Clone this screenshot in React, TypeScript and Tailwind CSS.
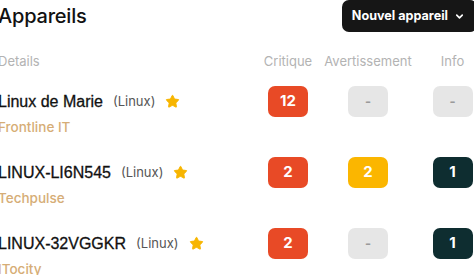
import { ChevronDown, Star } from 'lucide-react'

type Level = number | null

const devices: { name: string; os: string; company: string; critique: Level; warn: Level; info: Level }[] = [
  { name: 'Linux de Marie', os: '(Linux)', company: 'Frontline IT', critique: 12, warn: null, info: null },
  { name: 'LINUX-LI6N545', os: '(Linux)', company: 'Techpulse', critique: 2, warn: 2, info: 1 },
  { name: 'LINUX-32VGGKR', os: '(Linux)', company: 'ITocity', critique: 2, warn: null, info: 1 },
]

function Badge({ value, color }: { value: Level; color: string }) {
  if (value === null) {
    return (
      <div className="w-[40px] h-[31px] rounded-[7px] bg-[#e6e6e6] flex items-center justify-center text-[#9a9a9a] text-[13px] font-bold">
        -
      </div>
    )
  }
  return (
    <div className={`w-[40px] h-[31px] rounded-[7px] flex items-center justify-center text-white text-[15px] font-bold ${color}`}>
      {value}
    </div>
  )
}

export default function App() {
  return (
    <div className="w-[474px] h-[275px] overflow-hidden bg-white" style={{ fontFamily: 'Inter, "Noto Sans", sans-serif' }}>
      <div className="w-[486px] ml-[-2px]">
        {/* Title */}
        <div className="flex items-center justify-between h-[32px] pr-[7px]">
          <h1 className="text-[20px] font-medium text-[#111] tracking-[-0.2px]">Appareils</h1>
          <button className="h-[32px] pl-[10px] pr-[12px] rounded-[7px] bg-[#161616] text-white text-[12.6px] font-bold flex items-center gap-[6px]">
            Nouvel appareil
            <ChevronDown className="w-[11px] h-[11px]" strokeWidth={3.5} />
          </button>
        </div>

        {/* Header */}
        <div className="grid grid-cols-[263px_54px_106px_63px] items-center h-[20px] mt-[20px] text-[13px] text-[#b3b3b3]">
          <div>Details</div>
          <div className="text-center">Critique</div>
          <div className="text-center">Avertissement</div>
          <div className="text-center">Info</div>
        </div>

        {/* Rows */}
        <div className="mt-[14px] flex flex-col gap-[21px]">
          {devices.map((d) => (
            <div key={d.name}>
              <div className="grid grid-cols-[263px_54px_106px_63px] items-center h-[31px]">
                <div className="flex items-center">
                  <span className="font-['Liberation_Sans',Arial,sans-serif] text-[16px] text-[#111] [-webkit-text-stroke:0.3px_#111]">
                    {d.name}
                  </span>
                  <span className="ml-[10px] text-[13px] text-[#555]">{d.os}</span>
                  <Star className="ml-[10px] w-[15px] h-[15px] text-[#f7b500]" fill="#f7b500" strokeWidth={1.5} strokeLinejoin="round" />
                </div>
                <div className="flex justify-center">
                  <Badge value={d.critique} color="bg-[#e84a26]" />
                </div>
                <div className="flex justify-center">
                  <Badge value={d.warn} color="bg-[#fbb600]" />
                </div>
                <div className="flex justify-center">
                  <Badge value={d.info} color="bg-[#0e2d30]" />
                </div>
              </div>
              <div className="h-[18px] mt-[1px] flex items-center text-[13.5px] font-medium text-[#d6ad76]">{d.company}</div>
            </div>
          ))}
        </div>
      </div>
    </div>
  )
}
